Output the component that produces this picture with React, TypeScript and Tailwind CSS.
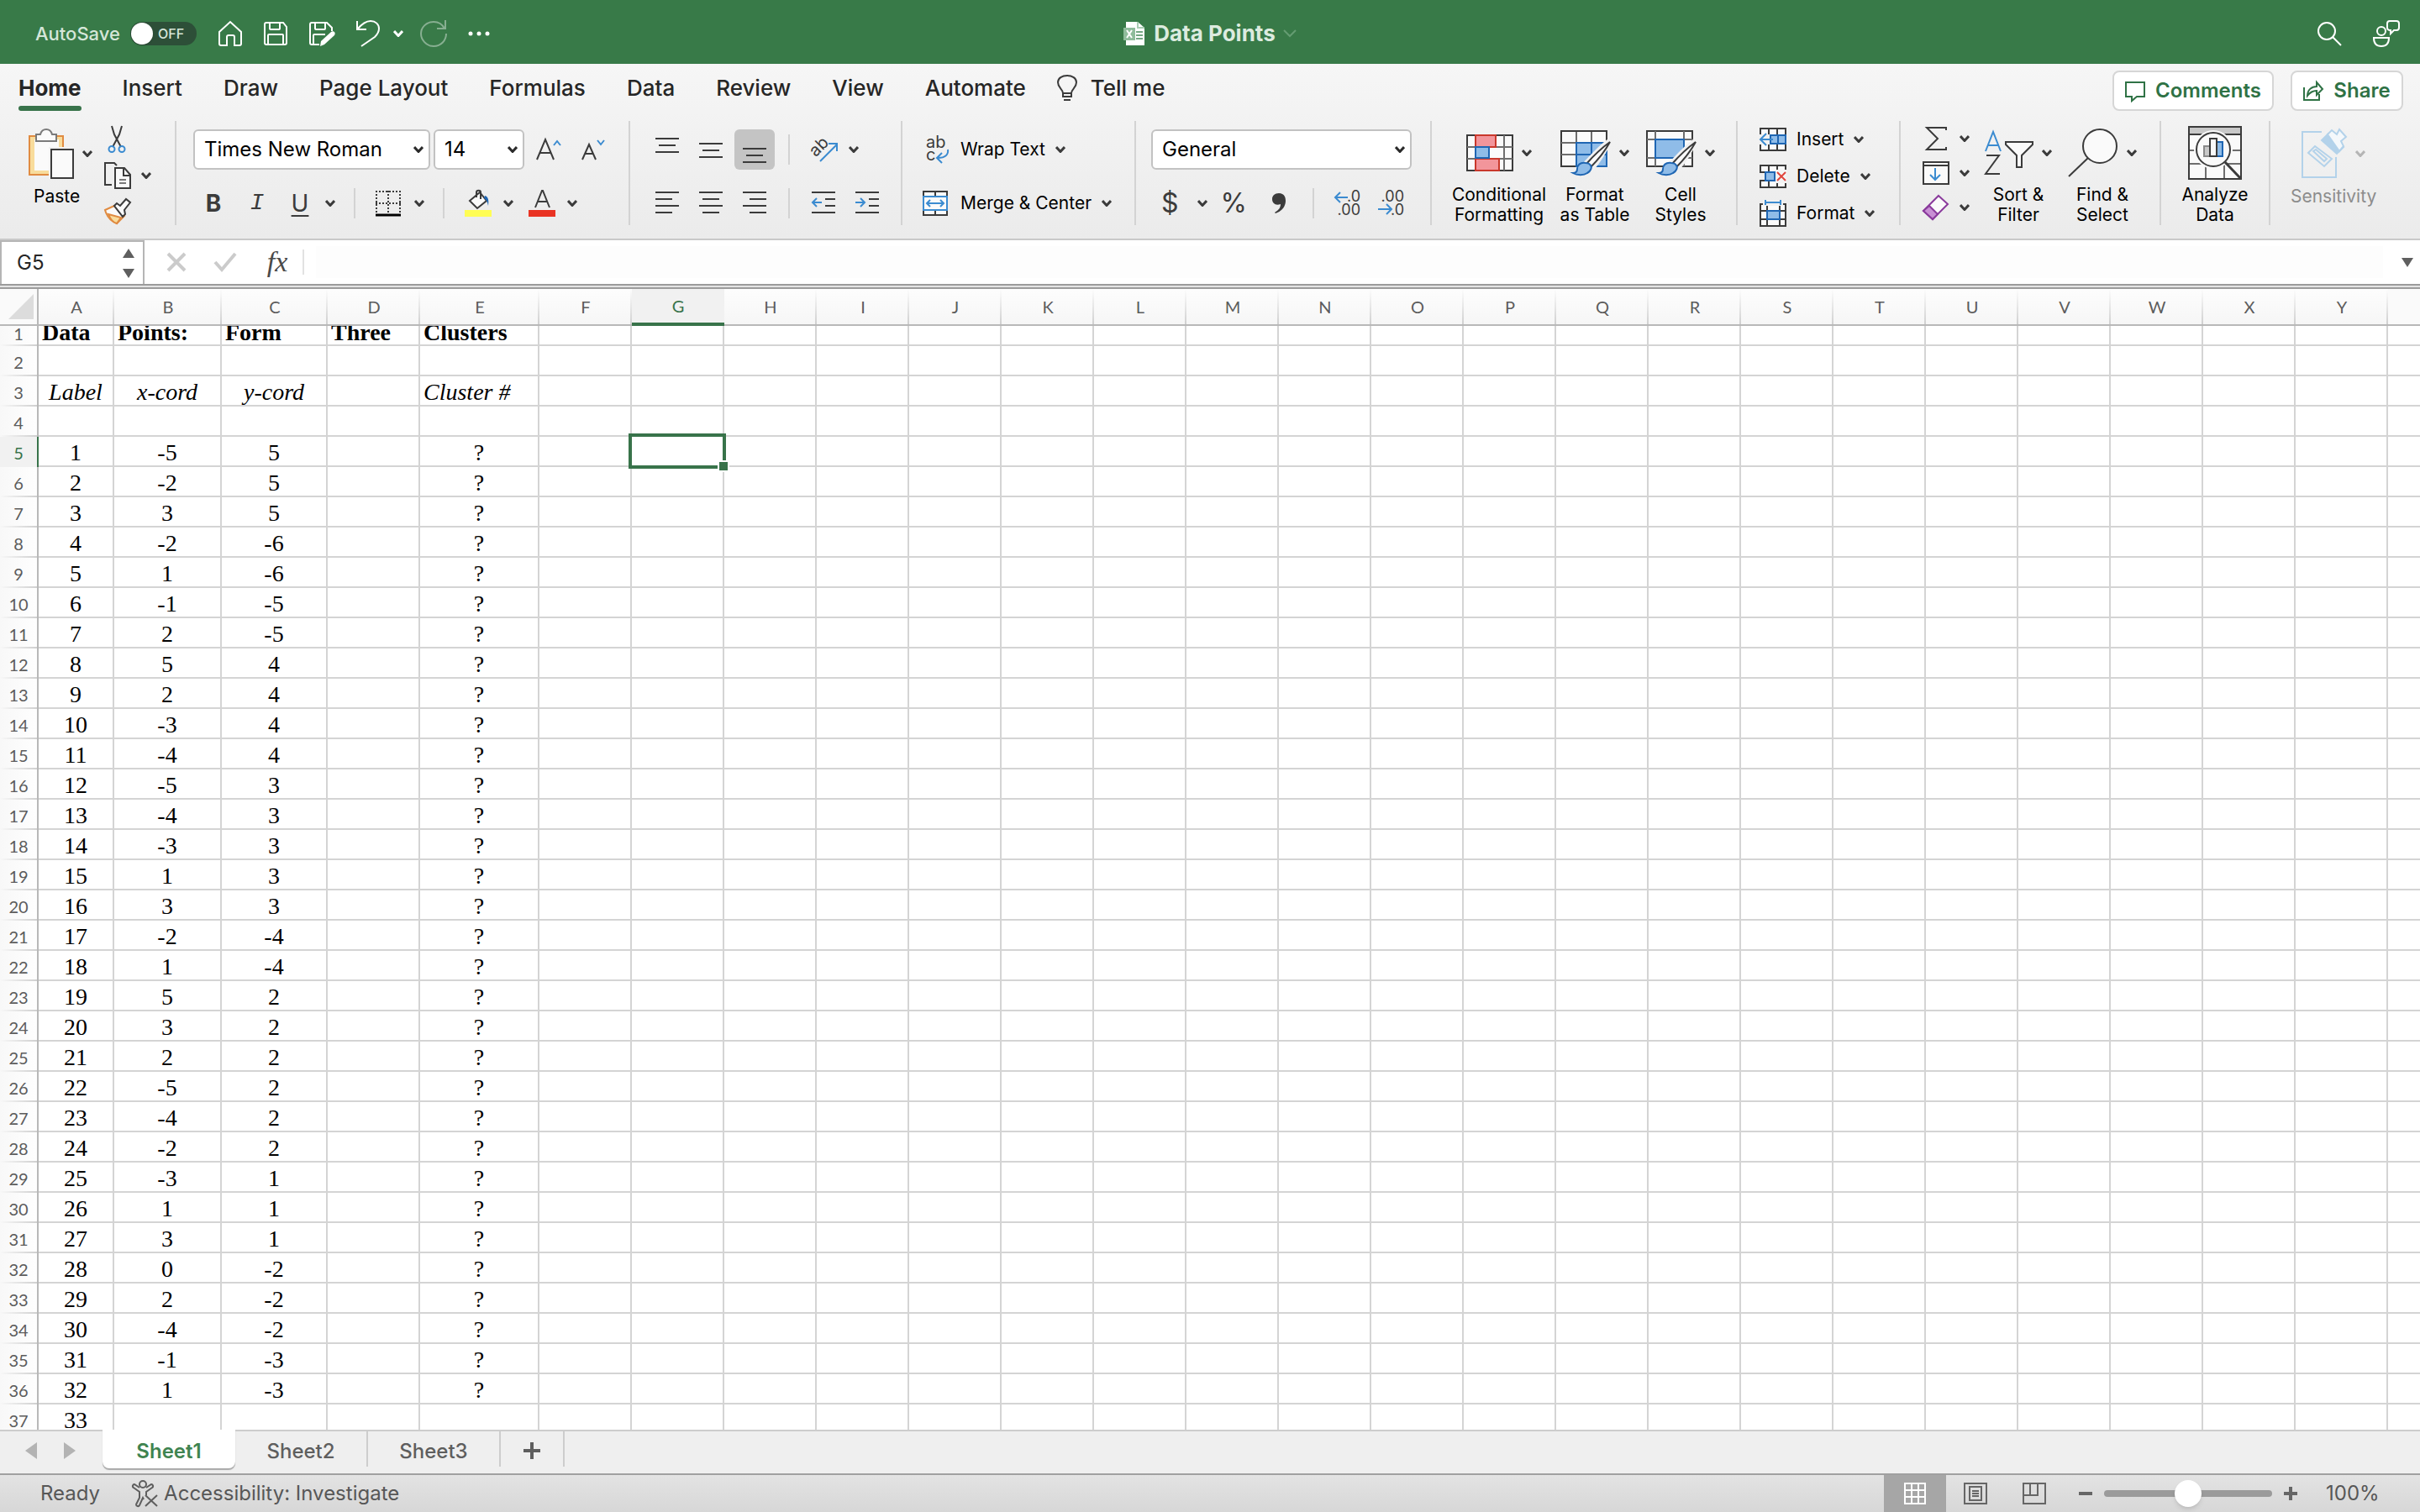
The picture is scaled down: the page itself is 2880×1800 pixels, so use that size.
import React, { useState } from 'react';
import clsx from 'clsx';

type Point = [label: number, x: number, y: number];

const POINTS: Point[] = [
  [1, -5, 5], [2, -2, 5], [3, 3, 5], [4, -2, -6], [5, 1, -6], [6, -1, -5], [7, 2, -5], [8, 5, 4],
  [9, 2, 4], [10, -3, 4], [11, -4, 4], [12, -5, 3], [13, -4, 3], [14, -3, 3], [15, 1, 3], [16, 3, 3],
  [17, -2, -4], [18, 1, -4], [19, 5, 2], [20, 3, 2], [21, 2, 2], [22, -5, 2], [23, -4, 2], [24, -2, 2],
  [25, -3, 1], [26, 1, 1], [27, 3, 1], [28, 0, -2], [29, 2, -2], [30, -4, -2], [31, -1, -3], [32, 1, -3],
];

const COLUMNS = 'ABCDEFGHIJKLMNOPQRSTUVWXY'.split('');
const COLUMN_WIDTHS: Record<string, string> = { A: 'w-[90px]', B: 'w-[128px]', C: 'w-[126px]', E: 'w-[142px]' };

// spreadsheet rows, keyed by column letter
const ROWS: Record<string, string>[] = [
  { A: 'Data', B: 'Points:', C: 'Form', D: 'Three', E: 'Clusters' },
  {},
  { A: 'Label', B: 'x-cord', C: 'y-cord', E: 'Cluster #' },
  {},
  ...POINTS.map(([label, x, y]) => ({ A: `${label}`, B: `${x}`, C: `${y}`, E: '?' })),
  { A: '33' },
];

const INK = '#3b3b3b';
const BLUE = '#3b8bd0';

/* ---------- shared bits ---------- */

const Caret = ({ className = 'text-[#3b3b3b]' }: { className?: string }) => (
  <svg className={clsx('w-3 h-2 shrink-0', className)} viewBox="0 0 12 8" fill="none" stroke="currentColor" strokeWidth="3">
    <path d="M1 1l5 5.500 5-5.500" />
  </svg>
);

const Icon = ({ w, h, className, children }: { w: number; h: number; className?: string; children: React.ReactNode }) => (
  <svg width={w} height={h} viewBox={`0 0 ${w} ${h}`} fill="none" stroke={INK} strokeWidth="2" className={clsx('shrink-0 overflow-visible', className)}>
    {children}
  </svg>
);

const Group = ({ className, children }: { className: string; children: React.ReactNode }) => (
  <div className={clsx('h-[124px] shrink-0 flex border-r-2 border-[#d3d3d3]', className)}>{children}</div>
);

const Divider = () => <div className="w-[2px] h-9 bg-[#d3d3d3] shrink-0" />;

interface BigButtonProps {
  icon: React.ReactNode;
  label: string;
  className?: string;
  labelClass?: string;
  muted?: boolean;
  caret?: boolean;
}

const BigButton: React.FC<BigButtonProps> = ({ icon, label, className, labelClass, muted, caret = true }) => (
  <button className={clsx('flex flex-col items-center shrink-0 text-[21px] leading-6', muted ? 'text-[#8c8c8c]' : 'text-black', className)}>
    <span className="h-[78px] flex items-center gap-[10px]">
      {icon}
      {caret && <Caret className={muted ? 'text-[#b5b5b5]' : undefined} />}
    </span>
    <span className={clsx('whitespace-pre text-center', labelClass)}>{label}</span>
  </button>
);

const Picker = ({ label, value, className }: { label: string; value: string; className: string }) => (
  <div className={clsx('relative h-12 shrink-0', className)}>
    <select aria-label={label} defaultValue={value} className="appearance-none w-full h-full pl-[11px] rounded-md border-2 border-[#c2c2c2] bg-white text-2xl text-black">
      <option>{value}</option>
    </select>
    <Caret className="absolute right-2 top-5 pointer-events-none text-[#2b2b2b]" />
  </div>
);

const Lines = ({ rows, top = 0 }: { rows: [number, number][]; top?: number }) => (
  <Icon w={28} h={28}>
    {rows.map(([x1, x2], i) => <path key={i} d={`M${x1} ${top + 1 + i * 8}H${x2}`} />)}
  </Icon>
);

/* ---------- icons ---------- */

const PasteIcon = () => (
  <Icon w={54} h={60}>
    <path d="M1 9h40v46H1z" fill="#f8dc9c" stroke="#e08b41" />
    <path d="M7 13h29v37H7z" fill="#fafafa" stroke="none" />
    <path d="M9 7h5c1-4 3-6 7-6s6 2 7 6h5v8H9z" fill="#fafafa" stroke="#7a7a7a" />
    <path d="M24 22h30v38H24z" fill="#f1f1f1" stroke="none" />
    <path d="M27 25h26v34H27z" fill="#fafafa" />
  </Icon>
);

const CutIcon = () => (
  <Icon w={32} h={32}>
    <path d="M9 0l3 10 8 15M21 0l-3 10-8 15" />
    <circle cx="9" cy="27.500" r="3.500" stroke={BLUE} />
    <circle cx="21" cy="27.500" r="3.500" stroke={BLUE} />
  </Icon>
);

const CopyIcon = () => (
  <Icon w={32} h={32}>
    <path d="M9 27H1V1h11l3 3" />
    <path d="M13 7h11l7 8v16H13z" fill="#fafafa" />
    <path d="M23 7v9h8" />
    <path d="M18 21h8M18 25h8" stroke="#7a7a7a" />
  </Icon>
);

const PainterIcon = () => (
  <Icon w={32} h={32}>
    <path d="M1 14l11-5 12 12-9 9C7 27 3 21 1 14z" fill="#fafafa" stroke="#e08b41" />
    <path d="M5 19l15 4-5 7c-4-1-8-6-10-11z" fill="#f8dc9c" stroke="#e08b41" />
    <path d="M12 9l3-3 4 3 7-8 5 4-7 9 1 5-3 3z" fill="#fafafa" />
  </Icon>
);

const FontSizeIcon = ({ up }: { up?: boolean }) => (
  <Icon w={30} h={26}>
    {up ? <path d="M1 25L11 1l10 24M4 17h14" /> : <path d="M1 25L9 7l8 18M4 18h10" />}
    <path d={up ? 'M21 8l4-5 4 5' : 'M19 2l4 5 4-5'} stroke={BLUE} />
  </Icon>
);

const BordersIcon = () => (
  <Icon w={30} h={30}>
    <path d="M1 0v27M29 0v27M15 0v27M0 1h30M0 15h30" strokeDasharray="2 2" />
    <path d="M0 29h30" stroke="#000" strokeWidth="3" />
  </Icon>
);

const FillColorIcon = () => (
  <Icon w={32} h={32}>
    <path d="M6 13L18 3l8 10-11 9z" fill="#fafafa" />
    <path d="M14 9V3c0-3 5-3 5 0v8" />
    <path d="M24 7c4 1 5 5 4 12-1-4-1-6-5-9z" fill="#1f66b3" stroke="none" />
    <path d="M0 24h32v8H0z" fill="#fffd54" stroke="none" />
  </Icon>
);

const FontColorIcon = () => (
  <Icon w={32} h={32}>
    <path d="M8 21l8-20h1l8 20M11 14h11" />
    <path d="M0 24h32v8H0z" fill="#e93323" stroke="none" />
  </Icon>
);

const OrientationIcon = () => (
  <Icon w={34} h={32}>
    <text x="4" y="25" transform="rotate(-45 6 22)" fontSize="20" fill={INK} stroke="none">ab</text>
    <path d="M12 30L32 10M22 9h10v9" stroke={BLUE} />
  </Icon>
);

const IndentIcon = ({ out }: { out?: boolean }) => (
  <Icon w={28} h={28}>
    <path d="M0 1h28M16 9h12M16 17h12M0 25h28" />
    <path d={out ? 'M12 13H1M6 8l-5 5 5 5' : 'M0 13h11M6 8l5 5-5 5'} stroke={BLUE} />
  </Icon>
);

const WrapIcon = () => (
  <Icon w={30} h={34}>
    <text fontSize="20" fill={INK} stroke="none">
      <tspan x="0" y="15">ab</tspan>
      <tspan x="0" y="30">c</tspan>
    </text>
    <path d="M26 17c1 6-3 10-12 10M19 21l-6 6 6 6" stroke={BLUE} />
  </Icon>
);

const MergeIcon = () => (
  <Icon w={30} h={30}>
    <path d="M1 1h28v28H1zM15 1v6M15 23v6" fill="#fafafa" />
    <path d="M1 7h28v16H1z" fill="#fafafa" stroke={BLUE} />
    <path d="M5 15h20M9 11l-4 4 4 4M21 11l4 4-4 4" stroke={BLUE} />
  </Icon>
);

const DecimalIcon = ({ more }: { more?: boolean }) => (
  <Icon w={32} h={32}>
    <text fontSize="18" textAnchor="end" fill={INK} stroke="none">
      <tspan x="31" y="14">{more ? '.0' : '.00'}</tspan>
      <tspan x="31" y="30">{more ? '.00' : '.0'}</tspan>
    </text>
    <path d={more ? 'M16 9H1M7 3L1 9l6 6' : 'M0 23h16M10 17l6 6-6 6'} stroke={BLUE} />
  </Icon>
);

const Brush = () => (
  <>
    <path d="M57 14C46 22 36 34 29 41l8 5c6-7 15-20 20-32z" fill="#fafafa" stroke="#f1f1f1" strokeWidth="6" />
    <path d="M59 14C48 22 38 32 31 40l5 4c7-7 17-19 23-30z" fill="#fafafa" />
    <path d="M30 39c-7-1-10 3-10 7s-2 5-5 5c5 3 13 3 17 0 4-2 6-7 4-9-1-2-3-3-6-3z" fill="#8fbce8" stroke="#1f66b3" />
  </>
);

const ConditionalIcon = () => (
  <Icon w={56} h={44}>
    <path d="M1 1h54v42H1z" fill="#fafafa" />
    <path d="M1 15h54M1 29h54M11 1v42M45 1v42" stroke="#6e6e6e" />
    <path d="M11 1h24v14H11z M11 29h28v14H11z" fill="#f2959b" stroke="#c9382c" />
    <path d="M11 15h16v13H11z" fill="#8fbce8" stroke="#1f66b3" />
    <path d="M28 16h16v12H28z" fill="#fafafa" stroke="none" />
  </Icon>
);

const FormatTableIcon = () => (
  <Icon w={60} h={54}>
    <path d="M1 1h54v42H1z" fill="#fafafa" />
    <path d="M1 15h54M1 29h18M19 1v42M37 1v14" stroke="#6e6e6e" />
    <path d="M19 15h36v28H19zM37 15v28M19 29h36" fill="#8fbce8" stroke="#1f66b3" />
    <path d="M55 1v14M1 1h54" />
    <Brush />
  </Icon>
);

const CellStylesIcon = () => (
  <Icon w={60} h={54}>
    <path d="M1 1h54v42H1z" fill="#fafafa" />
    <path d="M1 11h54M1 33h54M11 1v42M45 1v42" stroke="#6e6e6e" />
    <path d="M11 11h34v22H11z" fill="#8fbce8" stroke="#1f66b3" />
    <Brush />
  </Icon>
);

const InsertIcon = () => (
  <Icon w={32} h={28}>
    <path d="M1 1h30v26H1zM11 1v26M21 1v26M1 19h30" fill="#fafafa" />
    <path d="M0 8h16v12H0z" fill="#f1f1f1" stroke="none" />
    <path d="M13 9h18v10H13zM22 9v10" fill="#8fbce8" stroke="#1f66b3" />
    <path d="M16 14H2M8 7l-7 7 7 7" stroke={BLUE} />
  </Icon>
);

const DeleteIcon = () => (
  <Icon w={32} h={28}>
    <path d="M1 9V1h30v8zM1 19v8h30v-8zM11 1v8M21 1v8M11 19v8M21 19v8" fill="#fafafa" />
    <path d="M7 9h11v10H7z" fill="#8fbce8" stroke="#1f66b3" />
    <path d="M19 6h13v16H19z" fill="#f4f4f4" stroke="none" />
    <path d="M21 9l10 10M31 9L21 19" stroke="#e0443c" />
  </Icon>
);

const FormatIcon = () => (
  <Icon w={32} h={32}>
    <path d="M1 5h30v26H1zM9 5v26M24 5v26M1 13h30M1 23h30" fill="#fafafa" />
    <path d="M4 0h24v7H4z" fill="#f1f1f1" stroke="none" />
    <path d="M9 13h15v10H9z" fill="#8fbce8" stroke="#1f66b3" />
    <path d="M7 3h18M7 0v6M25 0v6" stroke={BLUE} />
  </Icon>
);

const SumIcon = () => (
  <Icon w={32} h={28}>
    <path d="M28 4V1H5l13 13L5 27h23v-3" />
  </Icon>
);

const FillDownIcon = () => (
  <Icon w={32} h={28}>
    <path d="M1 1h30v26H1zM1 5h30" fill="#fafafa" />
    <path d="M15 8v14M9 16l6 6 6-6" stroke={BLUE} />
  </Icon>
);

const ClearIcon = () => (
  <Icon w={32} h={30}>
    <path d="M19 1l11 10-18 18L1 19z" fill="#fafafa" stroke="#8a3a9c" />
    <path d="M8 13l10 10-6 6L1 19z" fill="#c88fd4" stroke="#8a3a9c" />
  </Icon>
);

const SortIcon = () => (
  <Icon w={58} h={54}>
    <path d="M1 25L10 2l9 23M4 18h12" stroke={BLUE} />
    <path d="M2 30h15L1 52h17" />
    <path d="M25 14h32v3L44 30v14h-6V30L25 17z" fill="#fafafa" />
  </Icon>
);

const FindIcon = () => (
  <Icon w={60} h={60}>
    <circle cx="38" cy="22" r="20" fill="#fafafa" />
    <path d="M24 36L1 58" />
  </Icon>
);

const AnalyzeIcon = () => (
  <Icon w={64} h={64}>
    <path d="M1 1h62v62H1z" fill="#fafafa" />
    <path d="M1 1h62v9H1z" fill="#c8c8c8" />
    <path d="M1 29h62M1 45h62M21 45v18M43 45v18" stroke="#6e6e6e" />
    <path d="M1 1h62v62H1z" />
    <circle cx="30" cy="28" r="23" fill="#fafafa" stroke="none" />
    <circle cx="30" cy="28" r="20" fill="#fafafa" />
    <path d="M19 24h8v12h-8z" fill="#c8c8c8" stroke="#8a8a8a" />
    <path d="M34 19h7v17h-7z" fill="#8fbce8" stroke="#1f66b3" />
    <path d="M26 15h8v21h-8z" fill="#fafafa" />
    <path d="M44 43l19 20" strokeWidth="3" />
  </Icon>
);

const SensitivityIcon = () => (
  <Icon w={54} h={60}>
    <g stroke="#b3d2ea">
      <path d="M24 4H1v54h40V34" />
      <path d="M8 29l8-8 20 15-9 9z" />
      <path d="M14 27l3-2 13 11-3 3z" />
      <path d="M24 14l8-8 18 16-8 8z" fill="#b3d2ea" />
      <path d="M31 7l5-5 6 5 3-6 8 9-6 5 3 6-5 6z" fill="#f4f8fb" />
    </g>
  </Icon>
);

/* ---------- sections ---------- */

const TitleBar = () => {
  const [autoSave, setAutoSave] = useState(false);
  return (
    <header className="h-[76px] shrink-0 bg-[#387a48] text-white grid grid-cols-[1fr_auto_1fr] items-center">
      <div className="flex items-center pl-[42px] pt-1">
        <label htmlFor="autosave" className="text-[22px] font-medium text-[#d5e6d9] w-[113px]">AutoSave</label>
        <span className="w-[79px] h-7 rounded-full bg-[#2d4f38] flex items-center shrink-0">
          <input id="autosave" type="checkbox" checked={autoSave} onChange={() => setAutoSave(!autoSave)} className="appearance-none w-[26px] h-[26px] ml-px rounded-full bg-white shadow" />
          <span className="pl-[6px] text-base font-medium text-[#d5e6d9]">OFF</span>
        </span>
        <button aria-label="Home" className="ml-[26px]">
          <Icon w={28} h={30}><path d="M1 13L14 1l13 12v14c0 1-1 2-2 2h-6V19c0-2-1-2-2-2h-5c-1 0-2 0-2 2v10H3c-1 0-2-1-2-2z" stroke="#fff" /></Icon>
        </button>
        <button aria-label="Save" className="ml-[26px]">
          <Icon w={28} h={28}><path d="M3 1h20l4 5v19c0 1-1 2-2 2H3c-1 0-2-1-2-2V3c0-1 1-2 2-2zM7 1v7c0 1 1 1 1 1h10c1 0 1-1 1-1V1M5 27V16c0-1 1-1 1-1h16c1 0 1 1 1 1v11" stroke="#fff" /></Icon>
        </button>
        <button aria-label="Save as" className="ml-[26px]">
          <Icon w={32} h={30}>
            <path d="M12 28H3c-1 0-2-1-2-2V4c0-1 1-2 2-2h18l6 6v4M7 2v7c0 1 1 1 1 1h10c1 0 1-1 1-1V2M5 28V17c0-1 1-1 1-1h13" stroke="#fff" />
            <path d="M13 30l1-6 12-11c3-2 6 1 4 4L18 28z" fill="#fff" stroke="none" />
          </Icon>
        </button>
        <button aria-label="Undo" className="ml-6">
          <Icon w={28} h={32}><path d="M1 1v10h11M1 11C7 4 12 1 17 1c6 0 10 4 10 9 0 4-2 7-5 10L6 31" stroke="#fff" /></Icon>
        </button>
        <button aria-label="Undo history" className="ml-4"><Caret className="text-white" /></button>
        <button aria-label="Redo" className="ml-5">
          <Icon w={32} h={32} className="opacity-40"><path d="M30 0v10H20M29 10C26 4 21 2 16 2 7 2 1 9 1 16s6 15 15 15 15-7 15-15" stroke="#fff" /></Icon>
        </button>
        <button aria-label="More commands" className="ml-6">
          <Icon w={28} h={6}><g fill="#fff" stroke="none"><circle cx="4" cy="3" r="2.500" /><circle cx="14" cy="3" r="2.500" /><circle cx="24" cy="3" r="2.500" /></g></Icon>
        </button>
      </div>
      <div className="flex items-center pt-1">
        <Icon w={26} h={30}>
          <path d="M3 1h14l8 7v21H3z" fill="#fff" stroke="none" />
          <path d="M17 1v7h8" stroke="#a9cdb3" />
          <path d="M15 13h8M15 17h8M15 21h8" stroke="#74a883" />
          <path d="M0 8h14v15H0z" fill="#8fbc9b" stroke="none" />
          <path d="M4 11l6 9M10 11l-6 9" stroke="#fff" />
        </Icon>
        <h1 className="ml-[10px] text-[26px] leading-8 font-bold text-[#dcebdf]">Data Points</h1>
        <svg className="w-4 h-[10px] ml-[9px] opacity-40" viewBox="0 0 16 10" fill="none" stroke="#a8d0b2" strokeWidth="2"><path d="M1 1l7 7 7-7" /></svg>
      </div>
      <div className="flex items-center justify-end gap-[38px] pr-6 pt-1">
        <button aria-label="Search">
          <Icon w={28} h={28}><circle cx="11" cy="11" r="10" stroke="#fff" /><path d="M18 18l10 10" stroke="#fff" /></Icon>
        </button>
        <button aria-label="Feedback">
          <Icon w={32} h={32}>
            <g stroke="#fff"><circle cx="10" cy="13" r="5" /><path d="M1 21h18c0 6-3 10-9 10s-9-4-9-10zM17 4c0-2 1-3 3-3h8c2 0 3 1 3 3v5c0 2-1 3-3 3h-3l-4 4v-4c-3 0-4-1-4-3z" /></g>
          </Icon>
        </button>
      </div>
    </header>
  );
};

const TABS = ['Home', 'Insert', 'Draw', 'Page Layout', 'Formulas', 'Data', 'Review', 'View', 'Automate'];

const TabBar = () => (
  <nav className="h-14 pl-[22px] pr-5 flex justify-between text-[26px] text-[#262626]">
    <div className="flex items-start gap-[49px]">
      {TABS.map(tab => (
        <button key={tab} className={clsx('h-14 pt-[11px] flex flex-col justify-between leading-9', tab === 'Home' ? 'font-bold' : 'font-medium')}>
          {tab}
          {tab === 'Home' && <span className="w-full h-[6px] rounded-full bg-[#38734a]" />}
        </button>
      ))}
      <button className="pt-[11px] -ml-3 flex items-center gap-4 font-medium leading-9">
        <Icon w={24} h={32}><path d="M7 22c0-5-6-6-6-13 0-5 5-8 11-8s11 3 11 8c0 7-6 8-6 13zM7 22v4h10v-4M8 30h8" /></Icon>
        Tell me
      </button>
    </div>
    <div className="flex gap-5 pt-2 text-[#2f7245] font-semibold">
      <button className="h-12 w-[192px] flex items-center justify-center gap-3 rounded-lg border-2 border-[#d6d6d6] bg-white">
        <Icon w={24} h={26}><path d="M1 3h22v17H14l-6 5v-5H1z" stroke="#2f7245" /></Icon>
        <span className="text-2xl">Comments</span>
      </button>
      <button className="h-12 w-[134px] flex items-center justify-center gap-3 rounded-lg border-2 border-[#d6d6d6] bg-white">
        <Icon w={24} h={24}><path d="M1 8v15h18v-7M5 18c0-7 5-11 11-11V2l7 8-7 7v-5c-5 0-8 2-11 6z" stroke="#2f7245" /></Icon>
        <span className="text-2xl">Share</span>
      </button>
    </div>
  </nav>
);

const Ribbon = () => (
  <div className="flex pt-3 pb-4">
    <Group className="w-[210px] pl-[34px] gap-[14px]">
      <BigButton icon={<PasteIcon />} label="Paste" className="w-[76px]" labelClass="self-start ml-[6px]" />
      <div className="flex flex-col justify-between pt-[6px]">
        <button aria-label="Cut"><CutIcon /></button>
        <button aria-label="Copy" className="flex items-center gap-3"><CopyIcon /><Caret /></button>
        <button aria-label="Format painter"><PainterIcon /></button>
      </div>
    </Group>

    <Group className="w-[540px] flex-col gap-[22px] pt-[10px] pl-5">
      <div className="flex items-center">
        <Picker label="Font" value="Times New Roman" className="w-[282px]" />
        <Picker label="Font size" value="14" className="w-[108px] ml-1" />
        <button aria-label="Grow font" className="ml-[14px]"><FontSizeIcon up /></button>
        <button aria-label="Shrink font" className="ml-6"><FontSizeIcon /></button>
      </div>
      <div className="h-9 flex items-center text-[28px] leading-8 text-[#3b3b3b]">
        <button className="w-9 ml-[6px] font-bold">B</button>
        <button className="w-9 ml-4 italic font-[Liberation_Mono]">I</button>
        <button className="w-9 ml-[15px] underline underline-offset-4">U</button>
        <button aria-label="Underline style" className="ml-3"><Caret /></button>
        <span className="ml-[22px]"><Divider /></span>
        <button className="ml-6 flex items-center gap-4" aria-label="Borders"><BordersIcon /><Caret /></button>
        <span className="ml-[22px]"><Divider /></span>
        <button className="ml-6 flex items-center gap-[14px]" aria-label="Fill color"><FillColorIcon /><Caret /></button>
        <button className="ml-[18px] flex items-center gap-[14px]" aria-label="Font color"><FontColorIcon /><Caret /></button>
      </div>
    </Group>

    <Group className="w-[324px] flex-col gap-[22px] pt-[10px] pl-[30px]">
      <div className="h-12 flex items-center">
        <button aria-label="Top align"><Lines rows={[[0, 28], [4, 24], [0, 28]]} /></button>
        <button aria-label="Middle align" className="ml-6"><Lines top={6} rows={[[0, 28], [4, 24], [0, 28]]} /></button>
        <button aria-label="Bottom align" className="ml-[14px] w-12 h-12 rounded-md bg-[#c4c4c4] flex items-center justify-center"><Lines top={12} rows={[[0, 28], [4, 24], [0, 28]]} /></button>
        <span className="ml-4"><Divider /></span>
        <button aria-label="Orientation" className="ml-6 flex items-center gap-3"><OrientationIcon /><Caret /></button>
      </div>
      <div className="h-9 flex items-center">
        <button aria-label="Align left"><Lines rows={[[0, 28], [0, 20], [0, 28], [0, 20]]} /></button>
        <button aria-label="Center" className="ml-6"><Lines rows={[[0, 28], [4, 24], [0, 28], [4, 24]]} /></button>
        <button aria-label="Align right" className="ml-6"><Lines rows={[[0, 28], [8, 28], [0, 28], [8, 28]]} /></button>
        <span className="ml-[26px]"><Divider /></span>
        <button aria-label="Decrease indent" className="ml-[26px]"><IndentIcon out /></button>
        <button aria-label="Increase indent" className="ml-6"><IndentIcon /></button>
      </div>
    </Group>

    <Group className="w-[278px] flex-col gap-[22px] pt-[10px] pl-6 text-[21px] text-black">
      <button className="h-12 flex items-center pl-1"><WrapIcon /><span className="pl-[11px] pr-3">Wrap Text</span><Caret /></button>
      <button className="h-9 flex items-center"><MergeIcon /><span className="pl-[15px] pr-3">Merge &amp; Center</span><Caret /></button>
    </Group>

    <Group className="w-[352px] flex-col gap-[22px] pt-[10px] pl-[18px]">
      <Picker label="Number format" value="General" className="w-[310px]" />
      <div className="h-9 flex items-center text-[32px] leading-9 text-[#3b3b3b]">
        <button aria-label="Currency" className="pl-3 flex items-center gap-[22px]"><span>$</span><Caret /></button>
        <button aria-label="Percent" className="ml-4">%</button>
        <button aria-label="Comma style" className="ml-[30px]">
          <Icon w={16} h={26}><path d="M8 1c5 0 8 3 8 9 0 7-5 13-12 15l-1-1c5-3 7-6 7-10-6 2-10-1-10-6 0-4 3-7 8-7z" fill={INK} stroke="none" /></Icon>
        </button>
        <span className="ml-8"><Divider /></span>
        <button aria-label="Increase decimal" className="ml-6"><DecimalIcon more /></button>
        <button aria-label="Decrease decimal" className="ml-5"><DecimalIcon /></button>
      </div>
    </Group>

    <Group className="w-[364px] pl-[22px] gap-[10px]">
      <BigButton icon={<ConditionalIcon />} label={'Conditional\nFormatting'} className="w-[116px]" />
      <BigButton icon={<FormatTableIcon />} label={'Format\nas Table'} className="w-[92px]" />
      <BigButton icon={<CellStylesIcon />} label={'Cell\nStyles'} className="w-[92px]" />
    </Group>

    <Group className="w-[194px] pl-[26px] flex-col text-[21px] leading-[44px] text-black">
      <button className="h-11 flex items-center gap-3"><InsertIcon />Insert<Caret /></button>
      <button className="h-11 flex items-center gap-3"><DeleteIcon />Delete<Caret /></button>
      <button className="h-11 flex items-center gap-3"><FormatIcon />Format<Caret /></button>
    </Group>

    <Group className="w-[310px] pl-[26px] gap-4">
      <div className="flex flex-col">
        <button aria-label="AutoSum" className="h-11 flex items-center gap-3"><SumIcon /><Caret /></button>
        <button aria-label="Fill" className="h-11 flex items-center gap-3"><FillDownIcon /><Caret /></button>
        <button aria-label="Clear" className="h-11 flex items-center gap-3"><ClearIcon /><Caret /></button>
      </div>
      <BigButton icon={<SortIcon />} label={'Sort &\nFilter'} className="w-[84px]" />
      <BigButton icon={<FindIcon />} label={'Find &\nSelect'} className="w-[84px]" />
    </Group>

    <Group className="w-[130px] justify-center">
      <BigButton icon={<AnalyzeIcon />} label={'Analyze\nData'} caret={false} />
    </Group>

    <div className="pl-6">
      <BigButton icon={<SensitivityIcon />} label="Sensitivity" muted />
    </div>
  </div>
);

const FormulaBar = () => (
  <div className="h-[52px] shrink-0 flex items-center bg-white border-t-2 border-[#c9c9c9] box-content">
    <div className="w-[172px] h-[52px] flex items-center justify-between pl-[18px] pr-[10px] border-2 border-b-0 border-[#b5b5b5]">
      <input aria-label="Name box" defaultValue="G5" className="w-20 text-2xl text-[#262626]" />
      <svg className="w-[14px] h-9" viewBox="0 0 14 36" fill="#5f5f5f"><path d="M7 1l7 11H0zM7 36L0 25h14z" /></svg>
    </div>
    <button aria-label="Cancel" className="ml-[26px]">
      <Icon w={24} h={24}><path d="M2 2l20 20M22 2L2 22" stroke="#cbcbcb" strokeWidth="4" /></Icon>
    </button>
    <button aria-label="Enter" className="ml-8">
      <Icon w={28} h={24}><path d="M2 12l8 9L26 2" stroke="#cbcbcb" strokeWidth="4" /></Icon>
    </button>
    <button aria-label="Insert function" className="ml-[34px] w-7 font-['Liberation_Serif'] italic text-[34px] leading-9 text-[#4a4a4a]">fx</button>
    <div className="w-[2px] h-[30px] ml-4 bg-[#e2e2e2]" />
    <input aria-label="Formula" className="flex-1 h-[38px] ml-[14px] px-2 bg-[#fdfdfd] text-2xl" />
    <button aria-label="Expand formula bar" className="w-11 flex justify-end pr-2">
      <svg className="w-[14px] h-[11px]" viewBox="0 0 14 11" fill="#5f5f5f"><path d="M0 0h14L7 11z" /></svg>
    </button>
  </div>
);

const cellStyle = (row: number, col: string) => {
  if (row === 1) return 'font-bold pl-1';
  if (row === 3) return col === 'E' ? 'italic pl-1 text-left' : 'italic text-center';
  return 'text-center';
};

const Sheet = () => (
  <main className="flex-1 min-h-0 overflow-hidden border-t-2 border-[#9c9c9c] bg-white">
    <table className="table-fixed w-full border-separate border-spacing-0">
      <thead className="font-[Lato] text-xl text-[#5c5c5c]">
        <tr>
          <th className="w-[46px] h-11 p-0 border-r-2 border-b-2 border-[#b8b8b8] bg-[#fafafa]">
            <svg className="w-[30px] h-[30px] ml-[10px]" viewBox="0 0 30 30" fill="#dcdcdc"><path d="M30 0v30H0z" /></svg>
          </th>
          {COLUMNS.map(col => (
            <th
              key={col}
              scope="col"
              className={clsx(
                'h-11 p-0 font-normal leading-10 bg-no-repeat bg-right bg-[length:2px_100%,100%_100%]',
                COLUMN_WIDTHS[col] || 'w-[110px]',
                col === 'G'
                  ? 'border-b-4 border-[#38734a] text-[#38734a] bg-[#f1f1f1]'
                  : 'border-b-2 border-[#b8b8b8] bg-[image:linear-gradient(to_bottom,#fdfdfd,#d0d0d0),linear-gradient(to_bottom,#fdfdfd,#f6f6f6)]',
              )}
            >
              {col}
            </th>
          ))}
          <th className="border-b-2 border-[#b8b8b8] bg-[#fafafa]" />
        </tr>
      </thead>
      <tbody className="font-['Liberation_Serif'] text-[28px] text-black">
        {ROWS.map((cells, i) => {
          const row = i + 1;
          // first row is scrolled partly under the header
          const box = row === 1 ? 'h-[22px] overflow-hidden leading-4' : 'h-[34px] leading-[37px]';
          return (
            <tr key={row}>
              <th
                scope="row"
                className={clsx(
                  'p-0 font-[Lato] font-normal text-xl border-r-2 bg-no-repeat bg-bottom bg-[length:100%_2px,100%_100%]',
                  row === 5
                    ? 'border-[#38734a] text-[#38734a] bg-[#f1f1f1]'
                    : 'border-[#b8b8b8] text-[#5c5c5c] bg-[image:linear-gradient(to_right,#f8f8f8,#d0d0d0),linear-gradient(to_right,#f8f8f8,#fefefe)]',
                )}
              >
                <div className={box}>{row}</div>
              </th>
              {COLUMNS.map(col => (
                <td
                  key={col}
                  className={clsx('p-0 border-r-2 border-b-2 border-[#d4d4d4] whitespace-nowrap', col === 'G' && row === 5 && 'relative', cellStyle(row, col))}
                >
                  <div className={box}>{cells[col]}</div>
                  {col === 'G' && row === 5 && (
                    <div className="absolute -inset-1 border-4 border-[#38734a]">
                      <div className="absolute -right-[8px] -bottom-[8px] w-[14px] h-[14px] bg-[#38734a] border-2 border-white" />
                    </div>
                  )}
                </td>
              ))}
              <td className="p-0 border-b-2 border-[#d4d4d4]" />
            </tr>
          );
        })}
      </tbody>
    </table>
  </main>
);

const SheetTabs = () => {
  const [active, setActive] = useState('Sheet1');
  return (
    <div className="h-[50px] shrink-0 flex border-t-2 border-[#cdcdcd] bg-[#efefef] box-content text-2xl text-[#5e5e5e]">
      <div className="w-[122px] flex items-center gap-8 pl-[30px] pb-1">
        <button aria-label="Previous sheet"><svg className="w-[14px] h-5" viewBox="0 0 14 20" fill="#b3b3b3"><path d="M14 0v20L0 10z" /></svg></button>
        <button aria-label="Next sheet"><svg className="w-[14px] h-5" viewBox="0 0 14 20" fill="#b3b3b3"><path d="M0 0v20l14-10z" /></svg></button>
      </div>
      {['Sheet1', 'Sheet2', 'Sheet3'].map(name => (
        <button
          key={name}
          onClick={() => setActive(name)}
          className={clsx(
            'w-[158px]',
            name === active
              ? 'h-[46px] -mt-[2px] pt-[5px] rounded-b-lg bg-white text-[#3f8450] font-semibold shadow-[0_2px_1px_#a8a8a8]'
              : 'h-[42px] pt-[6px] border-r-2 border-[#cdcdcd] font-medium',
          )}
        >
          {name}
        </button>
      ))}
      <button aria-label="New sheet" className="w-[76px] h-[42px] pt-1 border-r-2 border-[#cdcdcd] flex items-center justify-center">
        <Icon w={20} h={20}><path d="M10 0v20M0 10h20" stroke="#5e5e5e" strokeWidth="4" /></Icon>
      </button>
    </div>
  );
};

const StatusBar = () => (
  <footer className="h-[46px] shrink-0 flex items-center justify-between border-t-2 border-[#a0a0a0] bg-linear-to-b from-[#e3e3e3] to-[#d7d7d7] text-2xl text-[#575757]">
    <div className="flex items-center pl-12">
      <span>Ready</span>
      <button className="ml-[38px] flex items-center gap-[6px]">
        <Icon w={32} h={32}>
          <g stroke="#5e5e5e">
            <circle cx="13" cy="5" r="4" />
            <path d="M9 9L3 5C1 5 0 8 2 9l7 5v7L5 29c0 2 3 3 4 1l4-9 1 2M17 9l6-4c2 0 3 3 1 4l-7 5v4" />
            <path d="M16 18l14 13M30 18L16 31" />
          </g>
        </Icon>
        Accessibility: Investigate
      </button>
    </div>
    <div className="h-full flex items-center">
      <button aria-label="Normal view" className="w-[74px] h-full bg-[#a6a6a6] flex items-center justify-center">
        <Icon w={26} h={26}><path d="M1 1h24v24H1zM9 1v24M17 1v24M1 9h24M1 17h24" stroke="#fff" /></Icon>
      </button>
      <button aria-label="Page layout view" className="w-[70px] flex justify-center">
        <Icon w={28} h={26}><path d="M1 1h26v24H1zM7 5h14v16H7zM10 10h8M10 13h8M10 16h8" stroke="#666" /></Icon>
      </button>
      <button aria-label="Page break view" className="w-[70px] flex justify-center">
        <Icon w={28} h={26}><path d="M1 1h26v24H1zM9 1v14M18 1v14H1" stroke="#666" /></Icon>
      </button>
      <button aria-label="Zoom out" className="ml-[18px]"><Icon w={16} h={16}><path d="M0 8h16" stroke="#666" strokeWidth="4" /></Icon></button>
      <input
        aria-label="Zoom"
        type="range"
        defaultValue={50}
        className="appearance-none w-[200px] h-2 mx-[14px] rounded-full bg-[#9b9b9b] [&::-webkit-slider-thumb]:appearance-none [&::-webkit-slider-thumb]:w-8 [&::-webkit-slider-thumb]:h-8 [&::-webkit-slider-thumb]:rounded-full [&::-webkit-slider-thumb]:bg-white [&::-webkit-slider-thumb]:shadow-md"
      />
      <button aria-label="Zoom in"><Icon w={16} h={16}><path d="M0 8h16M8 0v16" stroke="#666" strokeWidth="4" /></Icon></button>
      <span className="w-[146px] pl-[34px]">100%</span>
    </div>
  </footer>
);

const App: React.FC = () => (
  <div className="h-screen flex flex-col overflow-hidden font-[Inter,sans-serif] bg-white">
    <TitleBar />
    <div className="shrink-0 bg-linear-to-b from-[#f6f6f6] to-[#ebebeb]">
      <TabBar />
      <Ribbon />
    </div>
    <FormulaBar />
    <div className="h-1 shrink-0 border-t-2 border-[#9c9c9c] bg-[#e4e4e4]" />
    <Sheet />
    <SheetTabs />
    <StatusBar />
  </div>
);

export default App;
